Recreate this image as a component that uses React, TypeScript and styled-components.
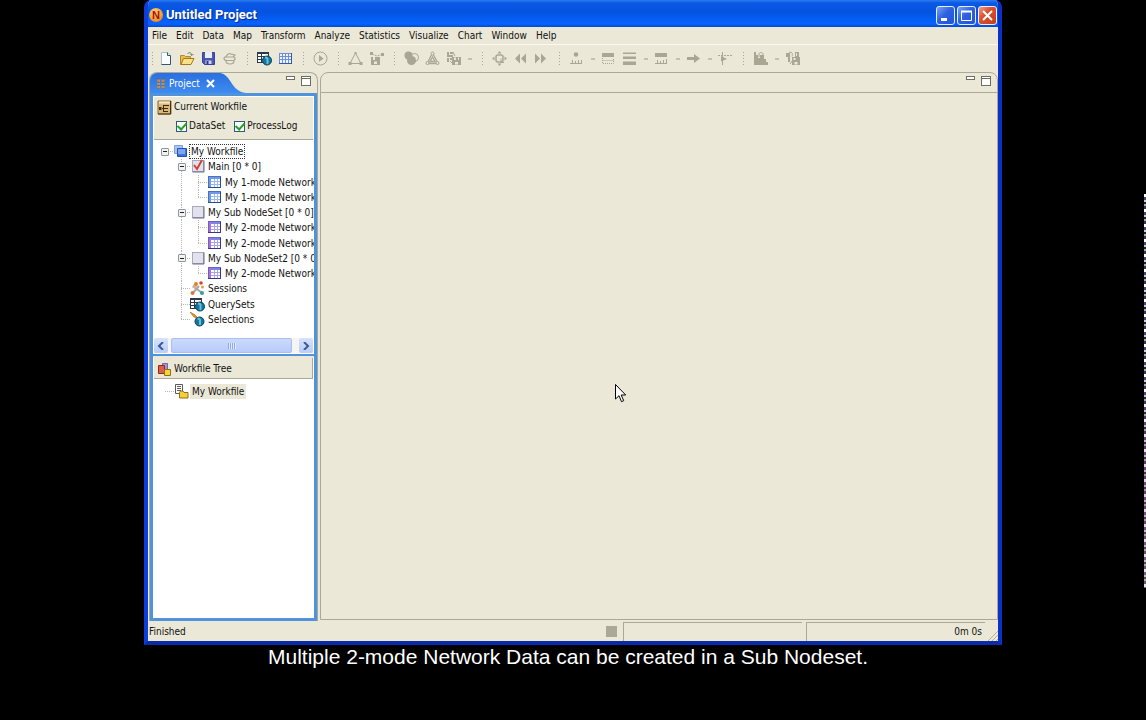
import React from "react";
import styled, { createGlobalStyle, css } from "styled-components";

const face = "#ebe8d8";
const shade = "#aca899";
const off = "#a9a694";
const focusBlue = "#4f93dd";

const Global = createGlobalStyle`
  * { box-sizing: border-box; }
  body {
    margin: 0;
    background: #000;
    color: #111;
    font: 10px/14px "DejaVu Sans Condensed", "DejaVu Sans", sans-serif;
  }
  button { font: inherit; color: inherit; margin: 0; padding: 0; border: 0; background: none; }
  svg { display: block; }
`;

const Stage = styled.main`
  position: relative;
  display: flex;
  flex-direction: column;
  min-height: 100vh;
  padding: 0 144px;
`;

const EdgeNoise = styled.div`
  position: absolute;
  right: 0;
  top: 194px;
  width: 2px;
  height: 394px;
  background:
    linear-gradient(#0000 0 45%, #b05a9055 75%, #c8a8b855 100%),
    repeating-linear-gradient(#fff 0 3px, #46466a 3px 6px, #c9c9dc 6px 8px, #222 8px 10px, #9fb0b0 10px 12px, #3a3450 12px 15px);
`;

const Window = styled.section`
  flex: 1;
  display: flex;
  flex-direction: column;
  background: ${face};
  border: solid #0a3fdc;
  border-width: 0 4px 4px;
  border-color: #0a3fdc #0a32c8 #0a2ba8 #0a3fdc;
  border-radius: 7px 7px 0 0;
  overflow: hidden;
`;

const TitleBar = styled.header`
  display: flex;
  align-items: center;
  gap: 3px;
  height: 27px;
  margin: 0 -4px;
  padding: 3px 5px 0;
  background: linear-gradient(#2a7df0 0, #0a58e4 3px, #0553e0 12px, #0560f8 21px, #0a62fc 24px, #0348cc 27px);
`;

const Logo = styled.span`
  display: grid;
  place-items: center;
  width: 14px;
  height: 14px;
  border-radius: 50%;
  background: radial-gradient(circle at 40% 30%, #ffd27a, #f79a2a 60%, #e06f10);
  color: #a80f0a;
  font: bold 11px/14px "Liberation Sans", sans-serif;
`;

const Title = styled.h1`
  flex: 1;
  margin: 0;
  color: #fff;
  font: bold 13px/16px Roboto, sans-serif;
  text-shadow: 1px 1px 1px #0a2a90;
`;

const WindowButton = styled.button<{ $close?: boolean }>`
  display: grid;
  place-items: center;
  width: 19px;
  height: 19px;
  margin-left: -2px;
  border: 1px solid #e6eeff;
  border-radius: 3px;
  background: ${(p) =>
    p.$close
      ? "linear-gradient(135deg, #f0a080, #dc5030 40%, #c83c18)"
      : "linear-gradient(135deg, #7ba4f4, #2f62e0 45%, #2255d8)"};
`;

const WindowButtons = styled.div`
  display: flex;
  gap: 4px;
`;

const MenuBar = styled.nav`
  display: flex;
  height: 18px;
  padding: 1px 0 0 1px;
  border-bottom: 1px solid #fbfaf2;
`;

const MenuItem = styled.button`
  padding: 0 6px 0 3px;
  line-height: 14px;
`;

const ToolBar = styled.div`
  display: flex;
  align-items: center;
  height: 27px;
`;

const Grip = styled.span<{ $first?: boolean }>`
  width: ${(p) => (p.$first ? 8 : 14)}px;
  height: 14px;
  background: repeating-linear-gradient(${shade} 0 1px, #0000 1px 3px) center / 1px 14px no-repeat;
`;

const Tool = styled.button`
  display: grid;
  place-items: center;
  width: 21px;
  height: 20px;
`;

const Caret = styled.span`
  width: 11px;
  height: 3px;
  background: linear-gradient(#c4c1b0, #c4c1b0) center / 4px 2px no-repeat;
`;

const Work = styled.div`
  flex: 1;
  display: flex;
  gap: 2px;
`;

const tabbed = css`
  display: flex;
  flex-direction: column;
  border: 1px solid ${shade};
  border-radius: 8px 8px 0 0;
`;

const Side = styled.aside`
  ${tabbed}
  width: 169px;
  margin-left: 1px;
  border-width: 1px 1px 0;
  overflow: hidden;
`;

const TabStrip = styled.div`
  display: flex;
  height: 20px;
  flex: none;
`;

const Tab = styled.div`
  display: flex;
  align-items: center;
  gap: 3px;
  padding: 1px 0 0 5px;
  width: 70px;
  color: #fff;
  background: linear-gradient(#2a6fe0, #3f8cf0);
`;

const TabClose = styled.button`
  margin-left: 3px;
`;

const TabTail = styled.svg`
  flex: none;
  width: 26px;
  height: 20px;
`;

const StripButtons = styled.div`
  flex: 1;
  display: flex;
  justify-content: flex-end;
  align-items: flex-start;
  gap: 5px;
  padding: 3px 6px 0 0;
`;

const FocusFrame = styled.div`
  flex: 1;
  display: flex;
  flex-direction: column;
  border: 3px solid ${focusBlue};
  background: #fff;
  min-width: 0;
`;

const Filters = styled.form`
  height: 43px;
  margin: 1px 1px 0;
  padding: 2px 3px 0;
  background: ${face};
  border-bottom: 1px solid ${shade};
`;

const Heading = styled.div`
  display: flex;
  align-items: center;
  gap: 2px;
  height: 16px;
`;

const Checks = styled.div`
  display: flex;
  gap: 9px;
  padding: 4px 0 0 19px;
`;

const Check = styled.label`
  display: flex;
  align-items: center;
  gap: 2px;
`;

const CheckBox = styled.input`
  appearance: none;
  display: grid;
  place-items: center;
  width: 11px;
  height: 11px;
  margin: 0;
  border: 1px solid #2c5a80;
  background: #fff;
  &:checked::before {
    content: "";
    width: 4px;
    height: 7px;
    margin-top: -2px;
    border: solid #21a121;
    border-width: 0 2px 2px 0;
    transform: rotate(42deg);
  }
`;

const Tree = styled.ul`
  display: grid;
  grid-auto-rows: 1fr;
  height: 183px;
  margin: 4px 0 11px;
  padding: 0 0 0 3px;
  list-style: none;
  overflow: hidden;
`;

const Row = styled.li`
  display: flex;
  align-items: center;
  white-space: nowrap;
`;

type Guide = "blank" | "line" | "tee" | "ell" | "stub" | "boxTee" | "boxRoot";
const dotsV = "repeating-linear-gradient(#b9b7ab 0 1px, #0000 1px 2px)";
const dotsH = "repeating-linear-gradient(90deg, #b9b7ab 0 1px, #0000 1px 2px)";
const guideBackground: Record<Guide, string> = {
  blank: "none",
  line: `${dotsV} 8px 0 / 1px 100% no-repeat`,
  tee: `${dotsV} 8px 0 / 1px 100% no-repeat, ${dotsH} 8px 50% / 9px 1px no-repeat`,
  ell: `${dotsV} 8px 0 / 1px 50% no-repeat, ${dotsH} 8px 50% / 9px 1px no-repeat`,
  stub: `${dotsH} 8px 50% / 9px 1px no-repeat`,
  boxTee: `${dotsV} 8px 0 / 1px 100% no-repeat, ${dotsH} 8px 50% / 9px 1px no-repeat`,
  boxRoot: `${dotsH} 8px 50% / 9px 1px no-repeat`,
};

const Cell = styled.span<{ $guide: Guide }>`
  flex: none;
  display: grid;
  place-items: center;
  width: 17px;
  height: 100%;
  background: ${(p) => guideBackground[p.$guide]};
`;

const Toggle = styled.button`
  width: 8px;
  height: 8px;
  border: 1px solid #8a97a8;
  border-radius: 1px;
  background: linear-gradient(#222, #222) center / 4px 1px no-repeat, #f4f2ea;
`;

const IconCell = styled.span`
  flex: none;
  width: 16px;
`;

const Label = styled.span<{ $mark?: "focus" | "soft" }>`
  padding: 0 1px;
  border: 1px dotted ${(p) => (p.$mark === "focus" ? "#333" : "transparent")};
  background: ${(p) => (p.$mark === "soft" ? face : "none")};
  line-height: 13px;
`;

const ScrollBar = styled.div`
  display: flex;
  gap: 3px;
  height: 15px;
  margin: 0 1px;
  background: #f6f5f0;
`;

const ScrollButton = styled.button`
  display: grid;
  place-items: center;
  width: 14px;
  border-radius: 2px;
  background: linear-gradient(#d6e2fe, #b9ccf8);
`;

const ScrollThumb = styled.div`
  display: grid;
  place-items: center;
  flex: 1;
  margin-right: 4px;
  border: 1px solid #a9bdf0;
  border-radius: 2px;
  background: linear-gradient(#cbdafe, #b7cbfa);
  &::after {
    content: "";
    width: 8px;
    height: 6px;
    background: repeating-linear-gradient(90deg, #8ea8e8 0 1px, #e2ebff 1px 2px);
  }
`;

const Sash = styled.div`
  height: 4px;
  margin: 1px 0 0;
  border-top: 2px solid ${focusBlue};
  background: ${face};
`;

const SectionHead = styled.div`
  display: flex;
  align-items: center;
  gap: 2px;
  height: 21px;
  margin: 0 1px;
  padding: 2px 3px 0;
  background: ${face};
  border: solid ${shade};
  border-width: 0 1px 1px 0;
`;

const WorkfileTree = styled.ul`
  margin: 5px 1px;
  padding: 0 0 0 3px;
  height: 15px;
  list-style: none;
  display: grid;
`;

const Editor = styled.section`
  ${tabbed}
  position: relative;
  flex: 1;
  margin-bottom: 1px;
`;

const EditorStrip = styled(TabStrip)`
  border-bottom: 1px solid ${shade};
`;

const Pointer = styled.svg`
  position: absolute;
  left: 294px;
  top: 311px;
`;

const StatusBar = styled.footer`
  display: flex;
  align-items: stretch;
  gap: 4px;
  height: 20px;
  padding: 1px 0 0 1px;
`;

const StatusText = styled.span`
  flex: 1;
  line-height: 19px;
`;

const StopButton = styled.button`
  align-self: center;
  width: 11px;
  height: 11px;
  margin-right: 2px;
  background: ${shade};
`;

const Field = styled.output`
  width: 179px;
  padding-right: 3px;
  border: solid ${shade};
  border-width: 1px 0 0 1px;
  text-align: right;
  line-height: 17px;
`;

const Corner = styled.svg`
  align-self: flex-end;
  margin-left: -2px;
`;

const Caption = styled.p`
  height: 75px;
  margin: 0;
  padding: 0 10px 0 0;
  color: #fff;
  text-align: center;
  white-space: nowrap;
  font: 21px/24px "Liberation Sans", Arial, sans-serif;
`;

const Svg = ({ children, size = 15 }: { children: React.ReactNode; size?: number }) => (
  <svg width={size} height={size} viewBox="0 0 15 15" fill="none" aria-hidden="true">
    {children}
  </svg>
);

const Globe = ({ x, y }: { x: number; y: number }) => (
  <g transform={`translate(${x} ${y})`}>
    <circle cx="5" cy="5" r="4.5" fill="#17749a" stroke="#0a3f5c" />
    <path d="M3 2c2 0 3 1 2.500 2.500s1 2-.5 4" stroke="#62c4dc" strokeWidth="2" />
  </g>
);

const TableRows = () => (
  <>
    <rect x=".5" y="1.500" width="11" height="10" fill="#fff" stroke="#2b3a48" />
    <path d="M0 2.500h12M1 5.500h10M1 8.500h10M4.500 3v9" stroke="#2b3a48" />
  </>
);

const icons = {
  newFile: (
    <Svg>
      <path d="M2.500 1.500h6l3 3v9h-9z" fill="#fdfeff" stroke="#a9bdcb" />
      <path d="M8.500 1.500v3h3v9h-9" stroke="#2f5877" />
    </Svg>
  ),
  open: (
    <Svg>
      <path d="M.5 4.500h4l1 1h5V13.500H.5z" fill="#e8bd4c" stroke="#b08a30" />
      <path d="M3.500 7.500H14L11 13.500H1z" fill="#fbe08a" stroke="#a27a1c" />
      <path d="M7.500 2.500c2-1.500 4-.5 4.500 1.500M10.500 3.500l1.500 1 1.500-1.500" stroke="#6f7a5a" />
    </Svg>
  ),
  save: (
    <Svg>
      <path d="M1.500 1.500h12v12h-10l-2-2z" fill="#4a55b4" stroke="#3a4298" />
      <path d="M4 1h7v6H4z" fill="#e8ecfa" />
      <path d="M4.500 9.500h6V13h-6z" fill="#cfd3ea" />
      <path d="M5.500 10h2v3h-2z" fill="#2f3684" />
    </Svg>
  ),
  print: (
    <Svg>
      <path d="M4 6c1-3 3-4 5-3s3 0 4 1l-2 2M2 7.500c0-2 2-1.500 4-1.500h5c3 0 2.500 3 .5 3.500H5C3 9.500 2 9 2 7.500zM4 10c0 3 2 3 4 3s4-1 4-3" stroke={off} strokeWidth="1.200" />
    </Svg>
  ),
  querySet: (
    <Svg>
      <TableRows />
      <Globe x={5} y={4.5} />
    </Svg>
  ),
  grid: (
    <Svg>
      <path d="M1 2h13v11H1z" fill="#eef4ff" />
      <path d="M1 2.500h13M1 5.500h13M1 8.500h13M1 12.500h13M1.500 2v11M4.500 2v11M7.500 2v11M10.500 2v11M13.500 2v11" stroke="#6f8fd4" />
      <path d="M1 12.500h13M13.500 2v11" stroke="#3458b0" />
    </Svg>
  ),
  run: (
    <Svg>
      <circle cx="7.500" cy="7.500" r="6.500" stroke={off} />
      <path d="M6 4l4.500 3.500L6 11z" fill={off} />
    </Svg>
  ),
  triangle: (
    <Svg>
      <path d="M7.500 2L2 12.500h11z" stroke={off} />
      <path d="M6.500 1h2v2h-2zM.5 11h3v3h-3zM11.500 11h3v3h-3z" fill={off} />
    </Svg>
  ),
  saveNet: (
    <Svg>
      <path d="M1 1h3v3H1zM12 2h3v3h-3zM2 6h9v8H2z" fill={off} />
      <path d="M4 6h2v3H4zM5 10.500h3V13H5z" fill={face} />
      <path d="M3 3l5 2 5-1.500" stroke={off} strokeDasharray="2 1" />
    </Svg>
  ),
  circles: (
    <Svg>
      <circle cx="4.500" cy="4.500" r="4" fill={off} />
      <circle cx="7.500" cy="9.500" r="4.500" fill={off} />
      <circle cx="10.500" cy="6.500" r="4" stroke={off} />
    </Svg>
  ),
  flask: (
    <Svg>
      <path d="M7.500 2L2 12.500h11zM7.500 6L5 10.500h5z" stroke={off} strokeWidth="1.300" />
      <circle cx="7.500" cy="2.500" r="1.500" fill={face} stroke={off} />
      <circle cx="2.500" cy="12" r="1.500" fill={face} stroke={off} />
      <circle cx="12.500" cy="12" r="1.500" fill={face} stroke={off} />
    </Svg>
  ),
  exportNet: (
    <Svg>
      <path d="M1 1h2v5H1zM4 1h3v2H4zM3 4h4v2H3zM1 7h2v4H1zM4 7h2v2H4zM6 6h9v8H6z" fill={off} />
      <path d="M8 6.500h2V9H8zM12 6.500h1V9h-1zM9 11h3v2.500H9z" fill={face} />
      <path d="M7 1l2 4M4 10l2 2" stroke={off} />
    </Svg>
  ),
  gear: (
    <Svg>
      <rect x="4" y="4" width="7" height="7" rx="2" stroke={off} strokeWidth="1.500" />
      <path d="M7.500 0L9.500 2.500h-4zM7.500 15l2-2.500h-4zM0 7.500L2.500 5.500v4zM15 7.500L12.500 5.500v4z" fill={off} />
      <path d="M9 7.500v4h3" stroke={off} />
    </Svg>
  ),
  back: (
    <Svg>
      <path d="M7 2.500v10L2 7.500zM13 2.500v10L8 7.500z" fill={off} />
    </Svg>
  ),
  forward: (
    <Svg>
      <path d="M1 2.500v10l5-5zM7 2.500v10l5-5z" fill={off} />
    </Svg>
  ),
  nodeLabel: (
    <Svg>
      <circle cx="7" cy="3.500" r="2.300" fill={off} />
      <path d="M1 12.500h12M3.500 9v3M6.500 10v2M9.500 9v3M12.500 9v3" stroke={off} />
    </Svg>
  ),
  border: (
    <Svg>
      <path d="M1 2h12v4H1z" fill={off} />
      <path d="M1.500 7v5.500h11V7M1.500 9.500h11" stroke={off} strokeDasharray="1 1" />
    </Svg>
  ),
  lines: (
    <Svg>
      <path d="M1 1.500h13V3H1zM1 5.500h13V8H1zM1 10.500h13V14H1z" fill={off} />
    </Svg>
  ),
  bandLabel: (
    <Svg>
      <path d="M1 2h12v4H1z" fill={off} />
      <path d="M1 12.500h12M3.500 9v3M6.500 10v2M9.500 9v3M12.500 8v4" stroke={off} />
    </Svg>
  ),
  arrow: (
    <Svg>
      <path d="M1 6h7V3l6 4.500L8 12V9H1z" fill={off} />
    </Svg>
  ),
  axis: (
    <Svg>
      <path d="M4.500 1v13" stroke={off} />
      <path d="M3 5l6 3-6 2.500z" fill={off} />
      <path d="M0 4.500h15" stroke={off} strokeDasharray="2 1" />
    </Svg>
  ),
  chart: (
    <Svg>
      <path d="M1 1h2v3h2V7h2V4h4v4h2v3h2v3H1z" fill={off} />
      <path d="M6 6V3c0-2 4-2 4 0v5" stroke={off} />
    </Svg>
  ),
  chartSave: (
    <Svg>
      <path d="M1 2h4v9H3V6H1zM7 6h8v8H7zM10 1h4v5h-4z" fill={off} />
      <path d="M8.500 7h2v2h-2zM9.500 11h3v2.500h-3zM11 2h1v3h-1z" fill={face} />
      <path d="M4 1.500c3-1 4 1 3 4M5 13l2-3" stroke={off} />
    </Svg>
  ),
  hierarchy: (
    <Svg size={11}>
      <path d="M4.500 0v15M11.500 0v15" stroke="#6b5a58" strokeWidth="2" />
      <path d="M3 2h4v3H3zM3 6.500h4v3H3zM3 11h4v3H3zM9 2h4v3H9zM9 6.500h4v3H9zM9 11h4v3H9z" fill="#c88f4c" />
    </Svg>
  ),
  currentFile: (
    <Svg>
      <path d="M1 1h13v13H1z" fill="#d9b978" stroke="#8a6a34" />
      <path d="M2 2.500h11" stroke="#f6e8c4" strokeWidth="2" />
      <path d="M13.500 1v13H1" stroke="#4a3210" />
      <path d="M5 8.500h2M7 5.500h5M7 8.500h4M7 11.500h4M6.500 5v7" stroke="#3f2a0c" />
      <path d="M2 7h2.500v3H2z" fill="#3f2a0c" />
    </Svg>
  ),
  workfile: (
    <Svg>
      <path d="M1.500 1.500h8v8h-8z" fill="#a9c6f2" stroke="#7f9fdc" />
      <path d="M4.500 4.500h9v8h-9z" fill="#3f74dc" stroke="#2350b0" />
      <path d="M5 5h7v5H5z" fill="#7aa6f4" />
    </Svg>
  ),
  checkedSet: (
    <Svg>
      <rect x="2.500" y="1.500" width="11" height="11" fill="#e2e0ec" stroke="#a8a8be" />
      <path d="M2.500 13h11.500V1.500" stroke="#6a6a86" />
      <path d="M4 6l3 4 5-9" stroke="#d2402e" strokeWidth="2" />
    </Svg>
  ),
  nodeSet: (
    <Svg>
      <rect x="2.500" y="1.500" width="11" height="11" fill="#e2e2ee" stroke="#a8a8be" />
      <path d="M2.500 13h11.500V1.500" stroke="#6a6a86" />
    </Svg>
  ),
  oneMode: (
    <Svg>
      <rect x="1.500" y="1.500" width="12" height="11" fill="#fff" stroke="#4a72c4" />
      <path d="M2 3h11M3 2v10" stroke="#6f9ae6" strokeWidth="2" />
      <path d="M4 6.500h9M4 9.500h9M7.500 4v8M10.500 4v8" stroke="#9ab8ea" />
      <path d="M13.500 2v10.500H1" stroke="#2a4a98" />
    </Svg>
  ),
  twoMode: (
    <Svg>
      <rect x="1.500" y="1.500" width="12" height="11" fill="#fff" stroke="#6a62c0" />
      <path d="M2 3h11" stroke="#7d86e6" strokeWidth="2" />
      <path d="M3 2v10" stroke="#b070dc" strokeWidth="2" />
      <path d="M4 6.500h9M4 9.500h9M7.500 4v8M10.500 4v8" stroke="#a9a4e4" />
      <path d="M13.500 2v10.500H1" stroke="#3c3488" />
    </Svg>
  ),
  sessions: (
    <Svg>
      <path d="M2 13L9 5M3 5l9 7" stroke="#a4a8a8" strokeWidth="2" />
      <path d="M2 6l2-3 3 2-2 3z" fill="#c9b49a" />
      <circle cx="6" cy="3" r="2" fill="#e0822a" />
      <circle cx="11" cy="2" r="1.800" fill="#d8452a" />
      <circle cx="12.500" cy="6" r="1.500" fill="#e8a23c" />
      <circle cx="2.500" cy="12" r="2" fill="#d87a3a" />
      <circle cx="12" cy="12" r="2" fill="#3c9a9a" />
    </Svg>
  ),
  selections: (
    <Svg>
      <path d="M0 0l5 3 3 3-4-1z" fill="#e8932a" stroke="#c9802a" />
      <Globe x={4.5} y={4.5} />
    </Svg>
  ),
  blocks: (
    <Svg>
      <path d="M5.500 1.500h5v6h-5z" fill="#9d9bd8" stroke="#6a68b0" />
      <path d="M1.500 3.500h6v8h-6z" fill="#d8604c" stroke="#94281c" />
      <path d="M7.500 7.500h6v6h-6z" fill="#f4d33c" stroke="#8f6f10" />
    </Svg>
  ),
  treeFile: (
    <Svg>
      <path d="M1.500.5h7v9h-7z" fill="#fff" stroke="#5a5a5a" />
      <path d="M3 2.500h4M3 4.500h4M3 6.500h4" stroke="#5a5a5a" />
      <path d="M5.500 8.500l1-1.500h2.500l1 1.500H14v5.500H5.500z" fill="#f4cf3c" stroke="#8f6f10" />
    </Svg>
  ),
};

type IconName = keyof typeof icons;

const menus = ["File", "Edit", "Data", "Map", "Transform", "Analyze", "Statistics", "Visualize", "Chart", "Window", "Help"];

const toolGroups: (IconName | "caret")[][] = [
  ["newFile", "open", "save", "print"],
  ["querySet", "grid"],
  ["run"],
  ["triangle", "saveNet"],
  ["circles", "flask", "exportNet", "caret"],
  ["gear", "back", "forward"],
  ["nodeLabel", "caret", "border", "lines", "caret", "bandLabel", "caret", "arrow", "caret", "axis"],
  ["chart", "caret", "chartSave"],
];

const treeRows: { guides: Guide[]; icon: IconName; text: string; focus?: boolean }[] = [
  { guides: ["boxRoot"], icon: "workfile", text: "My Workfile", focus: true },
  { guides: ["blank", "boxTee"], icon: "checkedSet", text: "Main [0 * 0]" },
  { guides: ["blank", "line", "tee"], icon: "oneMode", text: "My 1-mode Network1" },
  { guides: ["blank", "line", "ell"], icon: "oneMode", text: "My 1-mode Network2" },
  { guides: ["blank", "boxTee"], icon: "nodeSet", text: "My Sub NodeSet [0 * 0]" },
  { guides: ["blank", "line", "tee"], icon: "twoMode", text: "My 2-mode Network1" },
  { guides: ["blank", "line", "ell"], icon: "twoMode", text: "My 2-mode Network2" },
  { guides: ["blank", "boxTee"], icon: "nodeSet", text: "My Sub NodeSet2 [0 * 0]" },
  { guides: ["blank", "line", "ell"], icon: "twoMode", text: "My 2-mode Network3" },
  { guides: ["blank", "tee"], icon: "sessions", text: "Sessions" },
  { guides: ["blank", "tee"], icon: "querySet", text: "QuerySets" },
  { guides: ["blank", "ell"], icon: "selections", text: "Selections" },
];

const ViewButtons = () => (
  <StripButtons>
    <button aria-label="Minimize view">
      <svg width="10" height="10" fill="#fff" stroke="#6f6c60">
        <rect x=".5" y=".5" width="8" height="3" />
      </svg>
    </button>
    <button aria-label="Maximize view">
      <svg width="10" height="10" fill="#fff" stroke="#6f6c60">
        <rect x=".5" y=".5" width="9" height="9" />
        <path d="M0 2.500h10" />
      </svg>
    </button>
  </StripButtons>
);

export default function App() {
  return (
    <Stage>
      <Global />
      <Window>
        <TitleBar>
          <Logo>N</Logo>
          <Title>Untitled Project</Title>
          <WindowButtons>
            <WindowButton aria-label="Minimize">
              <svg width="13" height="13"><path d="M2 9h6v3H2z" fill="#fff" /></svg>
            </WindowButton>
            <WindowButton aria-label="Maximize">
              <svg width="13" height="13" fill="none" stroke="#fff"><path d="M1.500 2.500h10v9h-10zM1 3h11" /><path d="M1 2h11" /></svg>
            </WindowButton>
            <WindowButton $close aria-label="Close">
              <svg width="13" height="13" stroke="#fff" strokeWidth="2"><path d="M2 2l9 9M11 2l-9 9" /></svg>
            </WindowButton>
          </WindowButtons>
        </TitleBar>
        <MenuBar>
          {menus.map((m) => (
            <MenuItem key={m}>{m}</MenuItem>
          ))}
        </MenuBar>
        <ToolBar>
          {toolGroups.map((group, g) => (
            <React.Fragment key={g}>
              <Grip $first={g === 0} />
              {group.map((name, i) =>
                name === "caret" ? <Caret key={i} /> : <Tool key={i} aria-label={name}>{icons[name]}</Tool>
              )}
            </React.Fragment>
          ))}
        </ToolBar>
        <Work>
          <Side>
            <TabStrip>
              <Tab>
                {icons.hierarchy}
                Project
                <TabClose aria-label="Close Project">
                  <svg width="9" height="9" stroke="#fff" strokeWidth="2"><path d="M1 1l7 7M8 1L1 8" /></svg>
                </TabClose>
              </Tab>
              <TabTail viewBox="0 0 26 20" aria-hidden="true">
                <defs>
                  <linearGradient id="tab" x1="0" y1="0" x2="0" y2="1">
                    <stop offset="0" stopColor="#2a6fe0" />
                    <stop offset="1" stopColor="#3f8cf0" />
                  </linearGradient>
                </defs>
                <path d="M0 0c12 2 10 18 26 20H0z" fill="url(#tab)" />
              </TabTail>
              <ViewButtons />
            </TabStrip>
            <FocusFrame>
              <Filters>
                <Heading>{icons.currentFile}Current Workfile</Heading>
                <Checks>
                  <Check><CheckBox type="checkbox" defaultChecked />DataSet</Check>
                  <Check><CheckBox type="checkbox" defaultChecked />ProcessLog</Check>
                </Checks>
              </Filters>
              <Tree>
                {treeRows.map((row) => (
                  <Row key={row.text}>
                    {row.guides.map((g, i) => (
                      <Cell key={i} $guide={g}>
                        {g.startsWith("box") && <Toggle aria-label={`Collapse ${row.text}`} />}
                      </Cell>
                    ))}
                    <IconCell>{icons[row.icon]}</IconCell>
                    <Label $mark={row.focus ? "focus" : undefined}>{row.text}</Label>
                  </Row>
                ))}
              </Tree>
              <ScrollBar>
                <ScrollButton aria-label="Scroll left">
                  <svg width="8" height="8" fill="none" stroke="#3d5a96" strokeWidth="2"><path d="M6 0L2 4l4 4" /></svg>
                </ScrollButton>
                <ScrollThumb />
                <ScrollButton aria-label="Scroll right">
                  <svg width="8" height="8" fill="none" stroke="#3d5a96" strokeWidth="2"><path d="M2 0l4 4-4 4" /></svg>
                </ScrollButton>
              </ScrollBar>
              <Sash />
              <SectionHead>{icons.blocks}Workfile Tree</SectionHead>
              <WorkfileTree>
                <Row>
                  <Cell $guide="stub" />
                  <IconCell>{icons.treeFile}</IconCell>
                  <Label $mark="soft">My Workfile</Label>
                </Row>
              </WorkfileTree>
            </FocusFrame>
          </Side>
          <Editor>
            <EditorStrip>
              <ViewButtons />
            </EditorStrip>
            <Pointer width="12" height="19" viewBox="0 0 12 19" fill="#fff" stroke="#000" aria-hidden="true">
              <path d="M.5.500v14.500l3.500-3.300 2.500 6 2.200-1-2.500-5.700h4.500z" />
            </Pointer>
          </Editor>
        </Work>
        <StatusBar>
          <StatusText>Finished</StatusText>
          <StopButton aria-label="Stop" />
          <Field />
          <Field>0m 0s</Field>
          <Corner width="11" height="11" stroke="#b4b09e" aria-hidden="true">
            <path d="M1 11L11 1M5 11l6-6M9 11l2-2" />
          </Corner>
        </StatusBar>
      </Window>
      <Caption>Multiple 2-mode Network Data can be created in a Sub Nodeset.</Caption>
      <EdgeNoise />
    </Stage>
  );
}
